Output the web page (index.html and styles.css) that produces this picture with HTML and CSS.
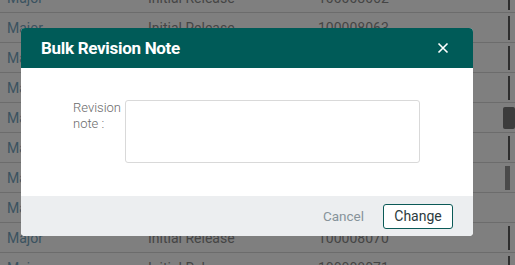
FILE: index.html
```html
<!DOCTYPE html>
<html>
<head>
<meta charset="utf-8">
<link rel="stylesheet" href="styles.css">
</head>
<body>
<div class="page">
  <div class="table">
    <div class="row"><span class="c1">Major</span><span class="c2">Initial Release</span><span class="c3">100008062</span><span class="c4"><i class="bar"></i></span></div>
    <div class="row"><span class="c1">Major</span><span class="c2">Initial Release</span><span class="c3">100008063</span><span class="c4"><i class="bar"></i></span></div>
    <div class="row"><span class="c1">Major</span><span class="c2">Initial Release</span><span class="c3">100008064</span><span class="c4"><i class="bar"></i></span></div>
    <div class="row"><span class="c1">Major</span><span class="c2">Initial Release</span><span class="c3">100008065</span><span class="c4"><i class="bar"></i></span></div>
    <div class="row"><span class="c1">Major</span><span class="c2">Initial Release</span><span class="c3">100008066</span><span class="c4"><i class="box"></i></span></div>
    <div class="row"><span class="c1">Major</span><span class="c2">Initial Release</span><span class="c3">100008067</span><span class="c4"><i class="bar"></i></span></div>
    <div class="row"><span class="c1">Major</span><span class="c2">Initial Release</span><span class="c3">100008068</span><span class="c4"><i class="bar wide"></i></span></div>
    <div class="row"><span class="c1">Major</span><span class="c2">Initial Release</span><span class="c3">100008069</span><span class="c4"></span></div>
    <div class="row"><span class="c1">Major</span><span class="c2">Initial Release</span><span class="c3">100008070</span><span class="c4"><i class="bar"></i></span></div>
    <div class="row"><span class="c1">Major</span><span class="c2">Initial Release</span><span class="c3">100008071</span><span class="c4"><i class="bar"></i></span></div>
  </div>

  <div class="modal">
    <div class="modal-header">
      <span class="modal-title">Bulk Revision Note</span>
      <svg class="close" width="12" height="12" viewBox="0 0 12 12"><path d="M1.5 1.5 L10.5 10.5 M10.5 1.5 L1.5 10.5" stroke="#fff" stroke-width="1.6" fill="none"/></svg>
    </div>
    <div class="modal-body">
      <label class="field-label">Revision note :</label>
      <div class="textarea"></div>
    </div>
    <div class="modal-footer">
      <span class="btn-cancel">Cancel</span>
      <span class="btn-change">Change</span>
    </div>
  </div>
</div>
</body>
</html>
```
FILE: styles.css
```css
html, body {
  margin: 0;
  padding: 0;
}
body {
  width: 515px;
  height: 265px;
  overflow: hidden;
  background: #7f7f7f;
  font-family: Roboto, "Liberation Sans", sans-serif;
}
.page {
  position: relative;
  width: 515px;
  height: 265px;
  overflow: hidden;
}
.table {
  margin-top: -17px;
}
.row {
  display: flex;
  align-items: center;
  height: 29px;
  border-bottom: 1px solid #6c6c6c;
  font-size: 14px;
  color: #454545;
}
.c1 {
  width: 141px;
  padding-left: 7px;
  color: #3a5260;
}
.c2 {
  width: 170px;
}
.c3 {
  width: 180px;
}
.c4 {
  flex: 1;
  display: flex;
  align-items: center;
  justify-content: flex-end;
  padding-right: 5px;
  height: 100%;
}
.bar {
  display: block;
  width: 2px;
  height: 24px;
  background: #2e2e2e;
}
.bar.wide {
  width: 5px;
  background: #4a4a4a;
}
.box {
  display: block;
  width: 12px;
  height: 22px;
  background: #3c3c3c;
  border-radius: 2px;
  margin-right: -5px;
}
.modal {
  position: absolute;
  left: 21px;
  top: 28px;
  width: 452px;
  border-radius: 4px;
  overflow: hidden;
  background: #fff;
  display: flex;
  flex-direction: column;
}
.modal-header {
  height: 40px;
  background: #005b58;
  display: flex;
  align-items: center;
  justify-content: space-between;
  padding: 0 24px 0 20px;
}
.modal-title {
  color: #fff;
  font-weight: 700;
  font-size: 17px;
  letter-spacing: -0.3px;
}
.close {
  display: block;
}
.modal-body {
  display: flex;
  padding: 32px 53px 33px 52px;
}
.field-label {
  width: 52px;
  font-size: 13px;
  line-height: 16px;
  color: #6a6a6a;
  font-weight: 300;
}
.textarea {
  width: 293px;
  height: 61px;
  border: 1px solid #d9d9d9;
  border-radius: 3px;
}
.modal-footer {
  height: 40px;
  background: #eceef0;
  display: flex;
  align-items: center;
  justify-content: flex-end;
  padding: 0 20px;
  gap: 19px;
}
.btn-cancel {
  font-size: 13.5px;
  color: #87939a;
}
.btn-change {
  box-sizing: border-box;
  width: 70px;
  height: 25px;
  border: 1px solid #0b5a57;
  border-radius: 3px;
  background: #fff;
  display: flex;
  align-items: center;
  justify-content: center;
  font-size: 14px;
  color: #2b3a3d;
}
```
